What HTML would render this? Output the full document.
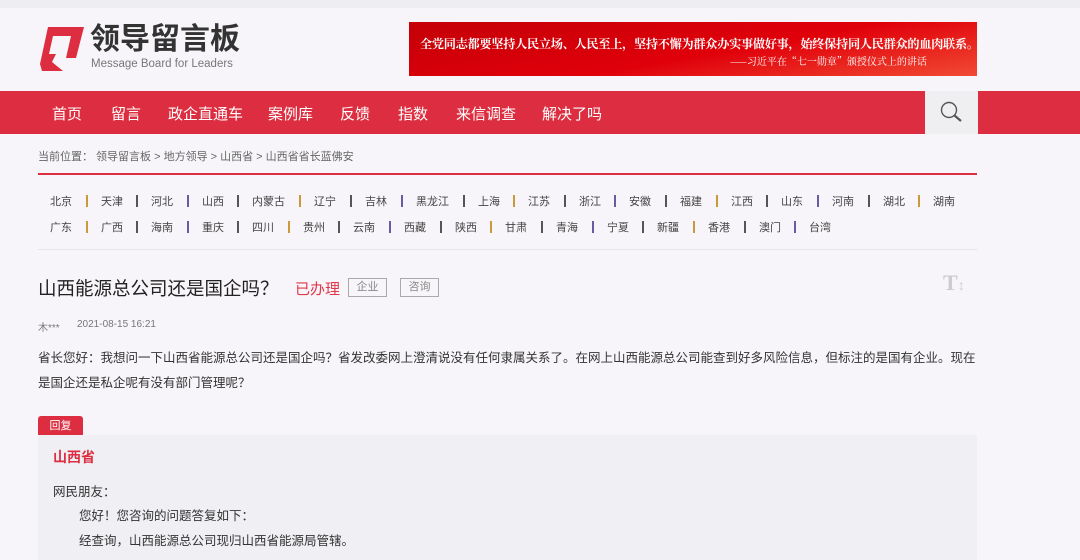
<!DOCTYPE html>
<html><head><meta charset="utf-8"><style>
*{margin:0;padding:0;box-sizing:border-box}
body{width:1080px;height:560px;overflow:hidden;background:#f7f5f9;font-family:"Liberation Sans","Noto Sans CJK SC",sans-serif;color:#333;position:relative}
.a{position:absolute;white-space:nowrap}
.nav{position:absolute;left:0;top:91px;width:1080px;height:43px;background:#dc2e40}
.nav span{position:absolute;top:12px;color:#fff;font-size:15px}
.p{font-size:11px;color:#444}
.s{position:absolute;width:1.5px;height:12px}
</style></head><body>
<div class="a" style="left:0;top:0;width:1080px;height:8px;background:#eeedf1"></div>
<svg class="a" style="left:40px;top:27px" width="45" height="44" viewBox="0 0 45 44"><path d="M8 0H44L36 31H26L31 9H13L9 27H16L12 35L23 44H2L0 37L8 0Z" fill="#dc2e40"/></svg>
<div class="a" style="left:90px;top:23px;font-size:30px;line-height:34px;font-weight:bold;color:#333">领导留言板</div>
<div class="a" style="left:91px;top:58px;font-size:11.5px;color:#777">Message Board for Leaders</div>
<div class="a" style="left:409px;top:22px;width:568px;height:54px;background:linear-gradient(170deg,#c40008 0%,#e0000a 55%,#f14a33 100%)"></div>
<div class="a" style="left:420px;top:35px;font-size:12.2px;font-weight:bold;color:#fff;font-family:'Noto Serif CJK SC',serif;letter-spacing:-0.3px">全党同志都要坚持人民立场、人民至上，坚持不懈为群众办实事做好事，始终保持同人民群众的血肉联系。</div>
<div class="a" style="left:730px;top:53px;font-size:10px;color:#fff;font-family:'Noto Serif CJK SC',serif">——习近平在“七一勋章”颁授仪式上的讲话</div>
<div class="nav">
<span style="left:52px">首页</span><span style="left:111px">留言</span><span style="left:168px">政企直通车</span><span style="left:268px">案例库</span><span style="left:340px">反馈</span><span style="left:398px">指数</span><span style="left:456px">来信调查</span><span style="left:542px">解决了吗</span>
<div class="a" style="left:925px;top:0;width:53px;height:43px;background:#efeff1"></div>
<svg class="a" style="left:939px;top:10px" width="26" height="24"><circle cx="10" cy="9" r="7.5" fill="none" stroke="#555" stroke-width="1.4"/><path d="M15.5 14.5L22 20" stroke="#555" stroke-width="2.2"/></svg>
</div>
<div class="a" style="left:38px;top:148px;font-size:11px;color:#666">当前位置： 领导留言板 &gt; 地方领导 &gt; 山西省 &gt; 山西省省长蓝佛安</div>
<div class="a" style="left:38px;top:173px;width:939px;height:2px;background:#dc2e40"></div>
<div class="a" style="left:38px;top:249px;width:939px;height:1px;background:#e6e4ea"></div>
<div id="prov"></div>
<div class="a" style="left:38px;top:275px;font-size:18.5px;color:#222">山西能源总公司还是国企吗？</div>
<div class="a" style="left:295px;top:278px;font-size:15px;color:#e0384a">已办理</div>
<div class="a" style="left:348px;top:278px;width:39px;height:19px;border:1px solid #aaa;font-size:11px;color:#888;text-align:center;line-height:17px">企业</div>
<div class="a" style="left:400px;top:278px;width:39px;height:19px;border:1px solid #aaa;font-size:11px;color:#888;text-align:center;line-height:17px">咨询</div>
<div class="a" style="left:943px;top:270px;font-size:22px;color:#ccc;font-family:'Liberation Serif',serif;font-weight:bold">T<span style="font-size:14px;font-weight:normal">↕</span></div>
<div class="a" style="left:38px;top:319px;font-size:10px;color:#777">木***</div>
<div class="a" style="left:77px;top:319px;font-size:10px;color:#777">2021-08-15 16:21</div>
<div class="a" style="left:38px;top:346px;width:945px;font-size:12.5px;line-height:25px;color:#333;white-space:normal">省长您好：我想问一下山西省能源总公司还是国企吗？省发改委网上澄清说没有任何隶属关系了。在网上山西能源总公司能查到好多风险信息，但标注的是国有企业。现在是国企还是私企呢有没有部门管理呢？</div>
<div class="a" style="left:38px;top:416px;width:45px;height:20px;background:#dc2e40;border-radius:3px 3px 0 0;color:#fff;font-size:11px;text-align:center;line-height:20px">回复</div>
<div class="a" style="left:38px;top:435px;width:939px;height:125px;background:#efeff4"></div>
<div class="a" style="left:53px;top:447px;font-size:14px;font-weight:bold;color:#dc2e40">山西省</div>
<div class="a" style="left:53px;top:481px;font-size:12.5px;color:#333">网民朋友：</div>
<div class="a" style="left:79px;top:505px;font-size:12.5px;color:#333">您好！您咨询的问题答复如下：</div>
<div class="a" style="left:79px;top:530px;font-size:12.5px;color:#333">经查询，山西能源总公司现归山西省能源局管辖。</div>
<script>
var r1=[["北京",50],["天津",101],["河北",151],["山西",202],["内蒙古",252],["辽宁",314],["吉林",365],["黑龙江",416],["上海",478],["江苏",528],["浙江",579],["安徽",629],["福建",680],["江西",731],["山东",781],["河南",832],["湖北",883],["湖南",933]];
var r2=[["广东",50],["广西",101],["海南",151],["重庆",202],["四川",252],["贵州",303],["云南",353],["西藏",404],["陕西",455],["甘肃",505],["青海",556],["宁夏",607],["新疆",657],["香港",708],["澳门",759],["台湾",809]];
var c=["#c79a3a","#555","#6a5aa0","#555"],h="";
[[r1,193],[r2,219]].forEach(function(rr){var r=rr[0],y=rr[1];r.forEach(function(p,i){h+='<div class="a p" style="left:'+p[1]+'px;top:'+y+'px">'+p[0]+'</div>';if(i<r.length-1){var sx=Math.round((p[1]+p[0].length*11+r[i+1][1])/2);h+='<div class="s" style="left:'+(sx-1)+'px;top:'+(y+2)+'px;background:'+c[i%4]+'"></div>';}});});
document.getElementById('prov').outerHTML=h;
</script>
</body></html>
